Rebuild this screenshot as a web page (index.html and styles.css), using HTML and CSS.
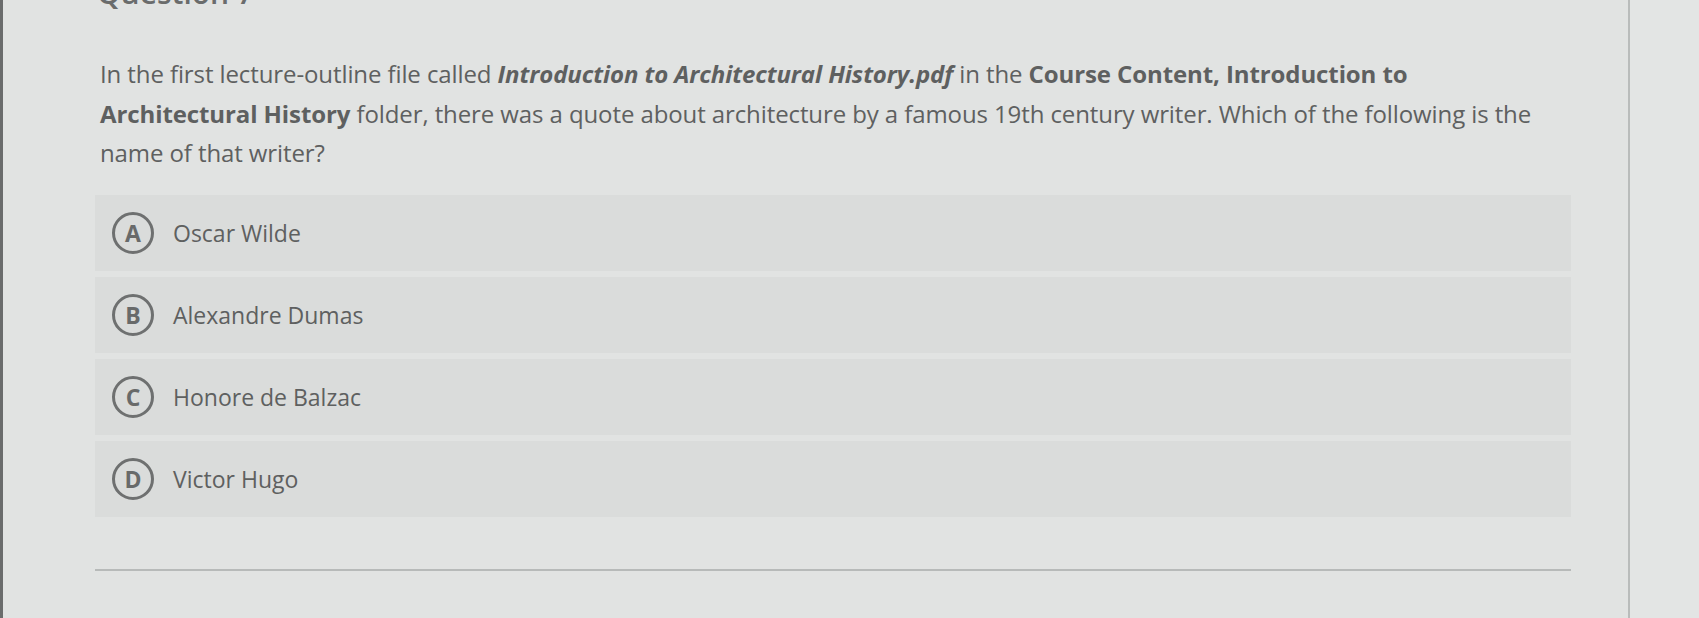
FILE: index.html
```html
<!DOCTYPE html>
<html lang="en">
<head>
<meta charset="utf-8">
<title>Question</title>
<link rel="stylesheet" href="styles.css">
</head>
<body>
<div class="page">
  <main class="main">
    <h2 class="q-title">Question 7</h2>
    <p class="q-text">In the first lecture-outline file called <b><i>Introduction to Architectural History.pdf</i></b> in the <b>Course Content, Introduction to Architectural History</b> folder, there was a quote about architecture by a famous 19th century writer. Which of the following is the name of that writer?</p>
    <div class="options">
      <div class="option"><span class="letter">A</span><span class="label">Oscar Wilde</span></div>
      <div class="option"><span class="letter">B</span><span class="label">Alexandre Dumas</span></div>
      <div class="option"><span class="letter">C</span><span class="label">Honore de Balzac</span></div>
      <div class="option"><span class="letter">D</span><span class="label">Victor Hugo</span></div>
    </div>
    <hr class="divider">
  </main>
  <aside class="rail"></aside>
</div>
</body>
</html>
```

FILE: styles.css
```css
html, body {
  margin: 0;
  padding: 0;
  height: 100%;
}
body {
  background: #e1e3e2;
  font-family: "Open Sans", "Liberation Sans", sans-serif;
  color: #5e6060;
  overflow: hidden;
}
.page {
  display: flex;
  height: 618px;
  border-left: 3px solid #6a6c6c;
  box-sizing: border-box;
}
.main {
  width: 1625px;
  box-sizing: border-box;
  padding-left: 92px;
  padding-right: 57px;
}
.rail {
  flex: 1;
  border-left: 2px solid #b9bcbb;
  background: #e3e5e4;
}
.q-title {
  margin: -25px 0 0 2px;
  font-size: 30px;
  line-height: 36px;
  font-weight: 600;
  color: #6a6c6c;
}
.q-text {
  margin: 43px 0 0 0;
  padding-left: 5px;
  font-size: 24px;
  line-height: 39.5px;
  width: 1456px;
  letter-spacing: -0.1px;
}
.q-text b {
  font-weight: 700;
}
.options {
  margin-top: 22px;
  display: flex;
  flex-direction: column;
  gap: 6px;
}
.option {
  display: flex;
  align-items: center;
  height: 76px;
  background: #dadcdb;
  padding-left: 17px;
  gap: 19px;
}
.letter {
  width: 36px;
  height: 36px;
  border: 3px solid #6e7070;
  border-radius: 50%;
  display: flex;
  align-items: center;
  justify-content: center;
  font-size: 23px;
  font-weight: 700;
  color: #686a6a;
}
.label {
  font-size: 23px;
}
.divider {
  margin: 52px 0 0 0;
  border: 0;
  height: 2px;
  background: #b7bab9;
}
```
